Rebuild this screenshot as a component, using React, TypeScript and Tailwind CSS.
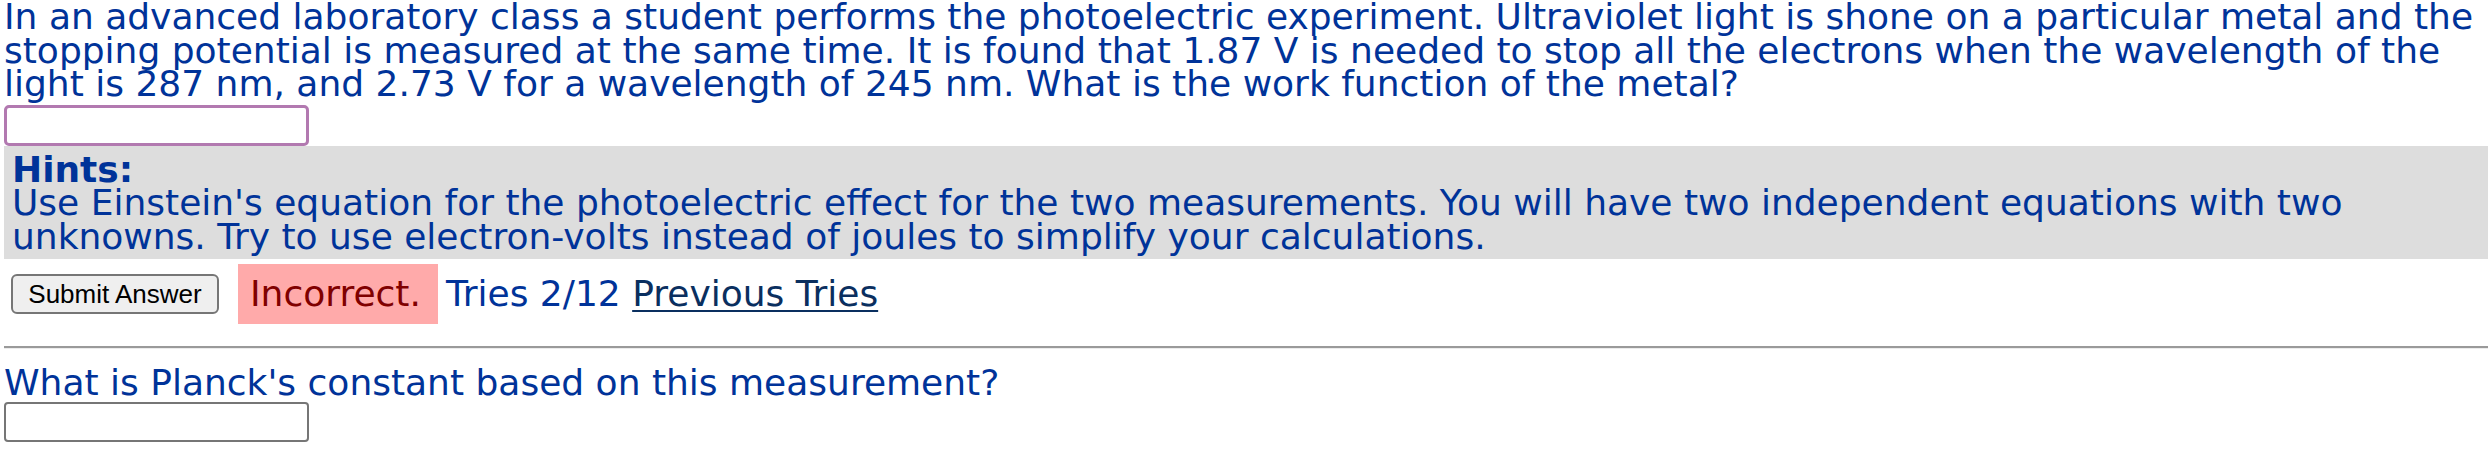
import React from "react";

export default function App() {
  return (
    <div className="w-[2488px] h-[450px] overflow-hidden bg-white pl-[4px] font-['DejaVu_Sans',Verdana,sans-serif] text-[36px] leading-[33.5px] text-[#003399]">
      <div className="pt-0">
        In an advanced laboratory class a student performs the photoelectric experiment. Ultraviolet light is shone on a particular metal and the stopping potential is measured at the same time. It is found that 1.87 V is needed to stop all the electrons when the wavelength of the light is 287 nm, and 2.73 V for a wavelength of 245 nm. What is the work function of the metal?
      </div>
      <div className="mt-[4.5px] w-[305px] h-[41px] border-[3px] border-[#b279b0] rounded-[5px] bg-white" />
      <div className="bg-[#dddddd] pt-[6.5px] pb-[6.3px] pl-[8px]">
        <div className="font-bold">Hints:</div>
        <div>
          Use Einstein's equation for the photoelectric effect for the two measurements. You will have two independent equations with two unknowns. Try to use electron-volts instead of joules to simplify your calculations.
        </div>
      </div>
      <div className="mt-[4.7px] flex items-center">
        <button className="ml-[7px] w-[208px] h-[40px] border-2 border-[#767676] rounded-[6px] bg-[#efefef] font-['Liberation_Sans',Arial,sans-serif] text-[26px] leading-none text-black">
          Submit Answer
        </button>
        <div className="ml-[19px] h-[60px] w-[200px] bg-[#ffaaaa] px-[12px] flex items-center text-[#800000]">
          Incorrect.
        </div>
        <div className="ml-[8px]">
          Tries 2/12{" "}
          <span className="text-[#0a2f5f] underline underline-offset-[4px] decoration-[2px]">Previous Tries</span>
        </div>
      </div>
      <div className="mt-[22px] h-0 border-t-2 border-[#9a9a9a] border-b border-b-[#ececec]" />
      <div className="mt-[17.5px]">What is Planck's constant based on this measurement?</div>
      <div className="mt-[2px] w-[305px] h-[40px] border-2 border-[#767676] rounded-[4px] bg-white" />
    </div>
  );
}
